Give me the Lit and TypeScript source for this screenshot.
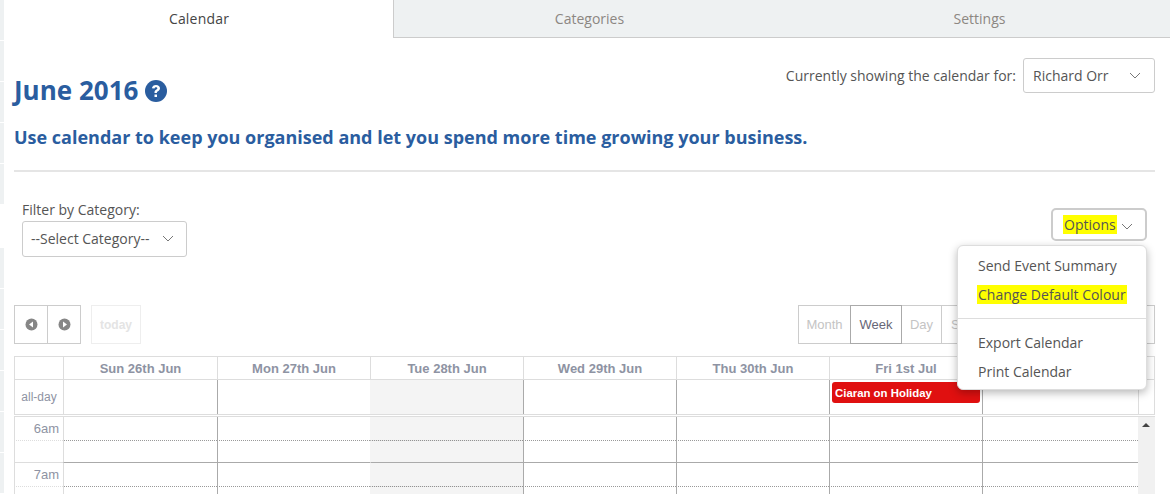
import { LitElement, html, css, svg } from "lit";
import { customElement } from "lit/decorators.js";

const chevron = html`<svg class="chev" width="12" height="7" viewBox="0 0 12 7"><path d="M1 1l5 5 5-5" fill="none" stroke="#777" stroke-width="1"/></svg>`;
const days = ["Sun 26th Jun", "Mon 27th Jun", "Tue 28th Jun", "Wed 29th Jun", "Thu 30th Jun", "Fri 1st Jul", ""];

@customElement("app-root")
export class AppRoot extends LitElement {
  static styles = css`
    :host { display: block; width: 1170px; height: 494px; overflow: hidden; background: #fff; font-family: "Open Sans", sans-serif; font-size: 14px; color: #555; }
    * { box-sizing: border-box; }
    .page { display: flex; height: 494px; }
    .strip { width: 4px; flex: none; display: flex; flex-direction: column; gap: 1px; }
    .strip i { display: block; height: 40px; background: #eef1f2; }
    .strip i.gap { height: 42px; background: #fff; }
    .main { flex: 1; min-width: 0; }
    .tabs { display: grid; grid-template-columns: repeat(3, 390px); height: 38px; overflow: hidden; }
    .tab { display: flex; align-items: center; justify-content: center; background: #eef1f2; color: #8c8782; border-bottom: 1px solid #ccc; padding: 0 0 1px 1px; }
    .tab.on { background: #fff; color: #444; border-bottom: none; border-right: 1px solid #ccc; letter-spacing: .2px; }
    .content { padding: 0 15px 0 10px; }
    .head { display: flex; justify-content: space-between; align-items: flex-start; padding-top: 20px; border-bottom: 2px solid #e5e5e5; height: 134px; }
    .title { flex: 1; min-width: 0; }
    h1 { margin: 14px 0 0; display: flex; align-items: center; gap: 7px; font-size: 26px; line-height: 36px; font-weight: 700; color: #2a5d9f; }
    h1 svg { margin-top: 2px; }
    h2 { margin: 16px 0 0; font-size: 18px; line-height: 26px; font-weight: 700; color: #2a5d9f; white-space: nowrap; }
    .who { flex: none; display: flex; align-items: center; gap: 7px; color: #555; white-space: nowrap; line-height: 33px; }
    .sel { display: flex; align-items: center; justify-content: space-between; height: 35px; border: 1px solid #ccc; border-radius: 3px; padding: 0 13px 1px 9px; background: #fff; color: #555; white-space: nowrap; }
    .sel.name { width: 132px; flex: none; }
    .filter-row { display: flex; justify-content: space-between; align-items: flex-start; height: 133px; padding: 28px 8px 0 8px; }
    .filter label { display: block; line-height: 20px; }
    .filter .sel { width: 165px; height: 36px; margin-top: 1px; padding: 0 12px 2px 8px; }
    .opts { position: relative; margin-top: 8px; }
    .optbtn { display: flex; align-items: center; gap: 5px; width: 96px; height: 33px; border: 2px solid #ccc; border-radius: 5px; padding: 0 11px; background: #fff; color: #555; }
    .optbtn .chev { margin-top: 3px; }
    mark { background: #ff0; color: #555; padding: 0 1px; margin: 0 -1px; }
    .menu { position: absolute; z-index: 5; top: 37px; right: 0; width: 190px; height: 145px; background: #fff; border: 1px solid #ddd; border-radius: 6px; box-shadow: 0 3px 8px rgba(0,0,0,.28); padding: 5px 0; }
    .menu div { height: 29px; line-height: 29px; padding-left: 20px; white-space: nowrap; }
    .menu hr { border: 0; border-top: 1px solid #ddd; margin: 9px 0 9px; }
    .toolbar { display: flex; justify-content: space-between; height: 39px; }
    .left { display: flex; gap: 10px; }
    .btns { display: flex; }
    .b { display: flex; align-items: center; justify-content: center; height: 39px; border: 1px solid #ccc; margin-left: -1px; font: 13px "Liberation Sans", Arial, sans-serif; color: #c4c4c4; background: #fff; }
    .b:first-child { margin-left: 0; }
    .b.nav { width: 34px; }
    .b.today { width: 50px; font-size: 12px; font-weight: 700; color: #e4e4e4; border-color: #eee; margin: 0; }
    .b.v1 { width: 53px; } .b.v2 { width: 52px; color: #667; border-color: #aaa; position: relative; z-index: 1; } .b.v3 { width: 41px; } .b.v4 { width: 214px; justify-content: flex-start; padding-left: 9px; }
    .cal { margin-top: 12px; width: 1141px; font: 12px "Liberation Sans", Arial, sans-serif; color: #8e93a3; }
    .row { display: grid; grid-template-columns: 49px 154px 153px 153px 153px 153px 153px 156px 17px; }
    .row > div { min-width: 0; }
    .hdr { height: 24px; border-top: 1px solid #ddd; border-bottom: 1px solid #ddd; font-size: 13px; }
    .hdr > div { border-left: 1px solid #ddd; display: flex; align-items: center; justify-content: center; font-weight: 700; white-space: nowrap; }
    .hdr > div:last-child { border-right: 1px solid #ddd; }
    .hdr > .fill { grid-column: span 2; }
    .allday { height: 35px; border-bottom: 1px solid #ddd; }
    .allday > div { border-left: 1px solid #aaa; }
    .allday > .t { border-left: 1px solid #ddd; display: flex; align-items: center; justify-content: center; padding-bottom: 1px; }
    .allday > .d0, .allday > .sb { border-left: 1px solid #ddd; }
    .allday > .sb { border-right: 1px solid #ddd; }
    .ev { margin: 2px 2px 0 2px; height: 21px; border-radius: 3px; background: #e01010; color: #fff; font-size: 11.4px; font-weight: 700; line-height: 22px; padding-left: 3px; white-space: nowrap; }
    .rule { height: 2px; border-bottom: 1px solid #ddd; }
    .slots > div { border-left: 1px solid #aaa; }
    .hour, .half { height: 23px; }
    .hour > div { border-bottom: 1px dotted #999; }
    .half > div { border-bottom: 1px solid #aaa; }
    .slots > .t { border-left: 1px solid #ddd; text-align: right; padding-right: 4px; line-height: 23px; font-size: 13px; }
    .hour > .t { border-bottom: 1px dotted #ddd; }
    .half > .t { border-bottom: 1px solid #ddd; }
    .slots > .d0 { border-left: 1px solid #ddd; }
    .slots > .sb { background: #f1f1f1; border: 0; position: relative; }
    .row > .cur { border-left-color: transparent; background: rgba(0, 0, 0, .043); }
    .arrow { position: absolute; top: 6px; left: 4px; width: 0; height: 0; border-left: 4px solid transparent; border-right: 4px solid transparent; border-bottom: 4px solid #444; }
  `;

  private cells() {
    return days.map((_, i) => html`<div class="${i === 0 ? "d0" : ""} ${i === 2 ? "cur" : ""}"></div>`);
  }

  private slot(label: string, first: boolean) {
    return html`
      <div class="row slots hour"><div class="t">${label}</div>${this.cells()}<div class="sb">${first ? html`<span class="arrow"></span>` : ""}</div></div>
      <div class="row slots half"><div class="t"></div>${this.cells()}<div class="sb"></div></div>`;
  }

  render() {
    const arrowL = svg`<circle cx="6.5" cy="6.5" r="6" fill="#868686"/><path d="M8 3.5v6L4 6.5z" fill="#fff"/>`;
    const arrowR = svg`<circle cx="6.5" cy="6.5" r="6" fill="#868686"/><path d="M5 3.5v6l4-3z" fill="#fff"/>`;
    return html`
      <div class="page">
        <div class="strip">
          ${[0, 1, 2, 3, 4].map(() => html`<i></i>`)}<i class="gap"></i>
          ${[0, 1, 2, 3, 4, 5].map(() => html`<i></i>`)}
        </div>
        <div class="main">
          <div class="tabs">
            <div class="tab on">Calendar</div>
            <div class="tab">Categories</div>
            <div class="tab">Settings</div>
          </div>
          <div class="content">
            <div class="head">
              <div class="title">
                <h1>June 2016
                  <svg width="22" height="22" viewBox="0 0 22 22"><circle cx="11" cy="11" r="11" fill="#2a5d9f"/><path d="M6.9 8.3c.3-2.1 1.9-3.3 4.1-3.3 2.3 0 4 1.3 4 3.2 0 1.6-1 2.3-2 3-.8.5-1.1.9-1.1 1.6v.3H9.5v-.6c0-1.4.6-2.1 1.6-2.7.9-.6 1.2-.9 1.2-1.5 0-.6-.5-1-1.3-1-.8 0-1.3.4-1.5 1.3z M9.5 14.5h2.5V17H9.5z" fill="#fff"/></svg>
                </h1>
                <h2>Use calendar to keep you organised and let you spend more time growing your business.</h2>
              </div>
              <div class="who">Currently showing the calendar for:
                <div class="sel name">Richard Orr ${chevron}</div>
              </div>
            </div>
            <div class="filter-row">
              <div class="filter">
                <label>Filter by Category:</label>
                <div class="sel">--Select Category-- ${chevron}</div>
              </div>
              <div class="opts">
                <div class="optbtn"><mark>Options</mark> ${chevron}</div>
                <div class="menu">
                  <div>Send Event Summary</div>
                  <div><mark>Change Default Colour</mark></div>
                  <hr />
                  <div>Export Calendar</div>
                  <div>Print Calendar</div>
                </div>
              </div>
            </div>
            <div class="toolbar">
              <div class="left">
                <div class="btns">
                  <div class="b nav"><svg width="13" height="13" viewBox="0 0 13 13">${arrowL}</svg></div>
                  <div class="b nav"><svg width="13" height="13" viewBox="0 0 13 13">${arrowR}</svg></div>
                </div>
                <div class="b today">today</div>
              </div>
              <div class="btns">
                <div class="b v1">Month</div>
                <div class="b v2">Week</div>
                <div class="b v3">Day</div>
                <div class="b v4">S</div>
              </div>
            </div>
            <div class="cal">
              <div class="row hdr">
                <div></div>
                ${days.map((d, i) => html`<div class="${i === 6 ? "fill" : ""}">${d}</div>`)}
              </div>
              <div class="row allday">
                <div class="t">all-day</div>
                ${days.map((_, i) => html`<div class="${i === 0 ? "d0" : ""} ${i === 2 ? "cur" : ""}">${i === 5 ? html`<div class="ev">Ciaran on Holiday</div>` : ""}</div>`)}
                <div class="sb"></div>
              </div>
              <div class="rule"></div>
              ${this.slot("6am", true)}
              ${this.slot("7am", false)}
            </div>
          </div>
        </div>
      </div>
    `;
  }
}
